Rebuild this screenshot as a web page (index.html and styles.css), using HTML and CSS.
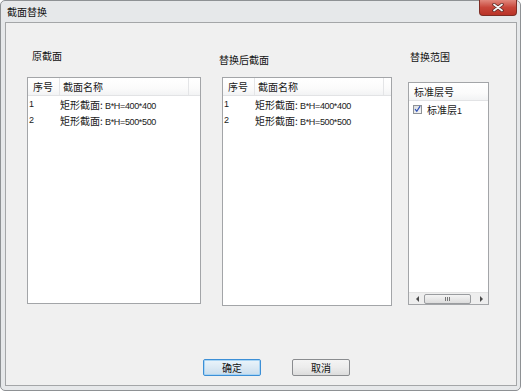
FILE: index.html
```html
<!DOCTYPE html>
<html lang="zh-CN">
<head>
  <meta charset="UTF-8" />
  <title>截面替换</title>
  <link rel="stylesheet" href="styles.css">
</head>
<body>

<div class="window">
  <!-- title bar -->
  <div class="titlebar">
    <span class="title">截面替换</span>
    <div class="close">
      <svg width="12" height="9" viewBox="0 0 12 9">
        <path d="M2 1.5 L10 7.5 M10 1.5 L2 7.5" stroke="#5a2420" stroke-width="3.4" stroke-linecap="round"/>
        <path d="M2 1.5 L10 7.5 M10 1.5 L2 7.5" stroke="#f4f4f4" stroke-width="1.8" stroke-linecap="round"/>
      </svg>
    </div>
  </div>

  <div class="client">
    <div class="panels">

      <!-- 原截面 -->
      <div class="panel panel-src">
        <div class="label">原截面</div>
        <div class="listbox">
          <div class="head">
            <span class="col-no">序号</span>
            <span class="col-name">截面名称</span>
            <span class="col-rest"></span>
          </div>
          <div class="row"><span class="col-no num">1</span><span class="col-name">矩形截面: <span class="latin">B*H=400*400</span></span></div>
          <div class="row"><span class="col-no num">2</span><span class="col-name">矩形截面: <span class="latin">B*H=500*500</span></span></div>
        </div>
      </div>

      <!-- 替换后截面 -->
      <div class="panel panel-dst">
        <div class="label">替换后截面</div>
        <div class="listbox">
          <div class="head">
            <span class="col-no">序号</span>
            <span class="col-name">截面名称</span>
            <span class="col-rest"></span>
          </div>
          <div class="row"><span class="col-no num">1</span><span class="col-name">矩形截面: <span class="latin">B*H=400*400</span></span></div>
          <div class="row"><span class="col-no num">2</span><span class="col-name">矩形截面: <span class="latin">B*H=500*500</span></span></div>
        </div>
      </div>

      <!-- 替换范围 -->
      <div class="panel panel-range">
        <div class="label">替换范围</div>
        <div class="listbox floors">
          <div class="head"><span class="col-floor">标准层号</span></div>
          <div class="row check-row">
            <span class="checkbox">
              <svg width="8" height="8" viewBox="0 0 8 8">
                <path d="M1.2 4.2 L3.2 6.6 L7 0.8" fill="none" stroke="#2f52b8" stroke-width="1.4"/>
              </svg>
            </span>
            <span>标准层<span class="num">1</span></span>
          </div>
          <div class="hscroll">
            <span class="arrow left"></span>
            <span class="thumb"><span class="grip"></span></span>
            <span class="arrow right"></span>
          </div>
        </div>
      </div>

    </div>

    <div class="actions">
      <button class="btn btn-default">确定</button>
      <button class="btn">取消</button>
    </div>
  </div>
</div>

</body>
</html>
```

FILE: styles.css
```css
* {
  margin: 0; padding: 0; box-sizing: border-box;
  font-family: "Noto Sans CJK SC", "Liberation Sans", sans-serif;
}

body {
  background: #ffffff;
  width: 523px;
  height: 392px;
  font-size: 10px;
  color: #1a1a1a;
}

.window {
  width: 521px;
  height: 391px;
  background: #e6e8ea;
  border: 1px solid #8e9194;
  border-radius: 5px;
  padding: 0 3px 4px 4px;
  display: flex;
  flex-direction: column;
}

.titlebar {
  height: 21px;
  display: flex;
  align-items: flex-start;
  position: relative;
}

.title {
  margin: 4px 0 0 2px;
  font-size: 10px;
  line-height: 14px;
  color: #111;
}

.close {
  position: absolute;
  right: 0px;
  top: -1px;
  width: 38px;
  height: 16px;
  background: linear-gradient(#e1887d, #c8463a 50%, #b93328);
  border: 1px solid #7e2d25;
  border-top: none;
  border-radius: 0 0 4px 4px;
  display: flex;
  align-items: center;
  justify-content: center;
}

.close svg { display: block; }

.client {
  flex: 1;
  background: #f0f0f0;
  border: 1px solid #a4a6a8;
  display: flex;
  flex-direction: column;
}

.panels {
  display: flex;
  align-items: flex-start;
  padding: 26px 0 0 21px;
}

.label {
  font-size: 10px;
  line-height: 14px;
  color: #111;
}

.listbox {
  background: #fff;
  border: 1px solid #a3a5a8;
  position: relative;
}

.panel-src { width: 174px; }
.panel-src .label { margin: 0 0 14px 5px; }
.panel-src .listbox { height: 227px; }

.panel-dst { width: 170px; margin-left: 21px; }
.panel-dst .label { margin: 4px 0 10px -3px; }
.panel-dst .listbox { height: 229px; }

.panel-range { width: 81px; margin-left: 16px; }
.panel-range .label { margin: 1px 0 18px 2px; }
.panel-range .listbox { height: 223px; }

.head {
  display: flex;
  height: 18px;
  align-items: center;
  background: linear-gradient(#ffffff, #fbfbfb 60%, #f2f3f4);
  border-bottom: 1px solid #e2e3e5;
}

.head span {
  height: 100%;
  display: flex;
  align-items: center;
  border-right: 1px solid #e4e5e7;
}

.head .col-no { width: 32px; padding-left: 5px; }
.head .col-name { width: 129px; padding-left: 3px; }
.head .col-rest { flex: 1; border-right: none; }
.floors .head .col-floor { flex: 1; padding-left: 5px; border-right: none; }

.row {
  display: flex;
  height: 16px;
  align-items: center;
}

.row .col-no { width: 32px; padding-left: 1px; }
.row .col-name { white-space: nowrap; }

.num {
  font-family: "Liberation Sans", sans-serif;
  font-size: 9px;
}

.latin {
  font-family: "Liberation Sans", sans-serif;
  font-size: 9px;
  letter-spacing: -0.35px;
}

.check-row {
  padding-left: 4px;
  gap: 5px;
}

.checkbox {
  width: 9px;
  height: 9px;
  border: 1px solid #8e9296;
  background: linear-gradient(135deg, #dcdee0, #f6f6f6);
  display: flex;
  align-items: center;
  justify-content: center;
}

.checkbox svg { display: block; }

.hscroll {
  position: absolute;
  left: 0;
  right: 0;
  bottom: 0;
  height: 12px;
  background: #eeeeee;
  border-top: 1px solid #e2e2e2;
  display: flex;
  align-items: center;
}

.arrow {
  width: 0;
  height: 0;
  border-top: 3px solid transparent;
  border-bottom: 3px solid transparent;
}

.arrow.left { border-right: 3px solid #4a4a4a; margin-left: 7px; }
.arrow.right { border-left: 3px solid #4a4a4a; margin-left: 9px; }

.thumb {
  width: 47px;
  height: 10px;
  margin-left: 5px;
  border: 1px solid #9a9c9f;
  border-radius: 2px;
  background: linear-gradient(#f4f4f4, #dcdcdc);
  display: flex;
  align-items: center;
  justify-content: center;
}

.grip {
  width: 5px;
  height: 4px;
  border-left: 1px solid #777;
  border-right: 1px solid #777;
  position: relative;
}

.grip::after {
  content: "";
  position: absolute;
  left: 1px;
  top: 0;
  width: 1px;
  height: 4px;
  background: #777;
}

.actions {
  margin-top: auto;
  padding: 0 0 9px 197px;
  display: flex;
  gap: 31px;
}

.btn {
  width: 58px;
  height: 17px;
  font-size: 10px;
  line-height: 1;
  color: #111;
  background: linear-gradient(#f4f4f4, #ececec 50%, #dcdcdc);
  border: 1px solid #8a8c8f;
  border-radius: 2px;
}

.btn-default {
  border-color: #3c8fd6;
  box-shadow: inset 0 0 0 1px #a8d4f4;
  background: linear-gradient(#eaf4fb, #dbe9f4 50%, #c9dcec);
}
```
